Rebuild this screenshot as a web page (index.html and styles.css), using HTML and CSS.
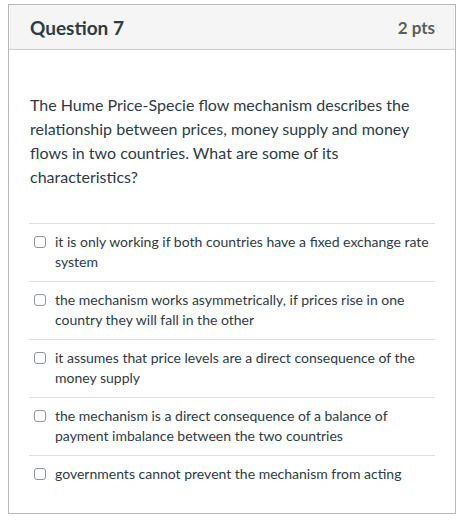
FILE: index.html
```html
<!DOCTYPE html>
<html>
<head>
<meta charset="utf-8">
<link rel="stylesheet" href="styles.css">
</head>
<body>
<div class="question">
  <div class="header">
    <span class="title">Question 7</span>
    <span class="pts">2 pts</span>
  </div>
  <div class="content">
    <p class="text">The Hume Price-Specie flow mechanism describes the relationship between prices, money supply and money flows in two countries. What are some of its characteristics?</p>
    <div class="answers">
      <label class="answer"><span class="box"></span><span class="label">it is only working if both countries have a fixed exchange rate system</span></label>
      <label class="answer"><span class="box"></span><span class="label">the mechanism works asymmetrically, if prices rise in one country they will fall in the other</span></label>
      <label class="answer"><span class="box"></span><span class="label">it assumes that price levels are a direct consequence of the money supply</span></label>
      <label class="answer"><span class="box"></span><span class="label">the mechanism is a direct consequence of a balance of payment imbalance between the two countries</span></label>
      <label class="answer"><span class="box"></span><span class="label">governments cannot prevent the mechanism from acting</span></label>
    </div>
  </div>
</div>
</body>
</html>
```

FILE: styles.css
```css
html, body {
  margin: 0;
  padding: 0;
  background: #ffffff;
}
body {
  padding: 4px 18px 0 8px;
  font-family: Lato, "Open Sans", sans-serif;
  color: #2d3b45;
}
.question {
  width: 446px;
  border: 1px solid #b5b9bc;
}
.header {
  display: flex;
  justify-content: space-between;
  align-items: center;
  height: 44px;
  padding: 0 20px 0 21px;
  background: #f5f5f5;
  border-bottom: 1px solid #c7cdd1;
}
.title {
  font-size: 19px;
  font-weight: 700;
  color: #2d3b45;
}
.pts {
  font-size: 17px;
  font-weight: 700;
  color: #565e63;
}
.content {
  padding: 43px 20px 20px 20px;
}
.text {
  margin: 0 0 34px 1px;
  font-size: 16px;
  line-height: 24px;
}
.answers {
  display: flex;
  flex-direction: column;
}
.answer {
  display: flex;
  align-items: flex-start;
  gap: 9px;
  padding: 8px 0 9px 5px;
  border-top: 1px solid #dcdfe1;
  font-size: 14px;
  line-height: 20px;
}
.box {
  flex: none;
  width: 10px;
  height: 10px;
  margin-top: 4px;
  border: 1px solid #8f969b;
  border-radius: 3px;
  background: #fff;
}
.label {
  color: #2d3b45;
}
```
